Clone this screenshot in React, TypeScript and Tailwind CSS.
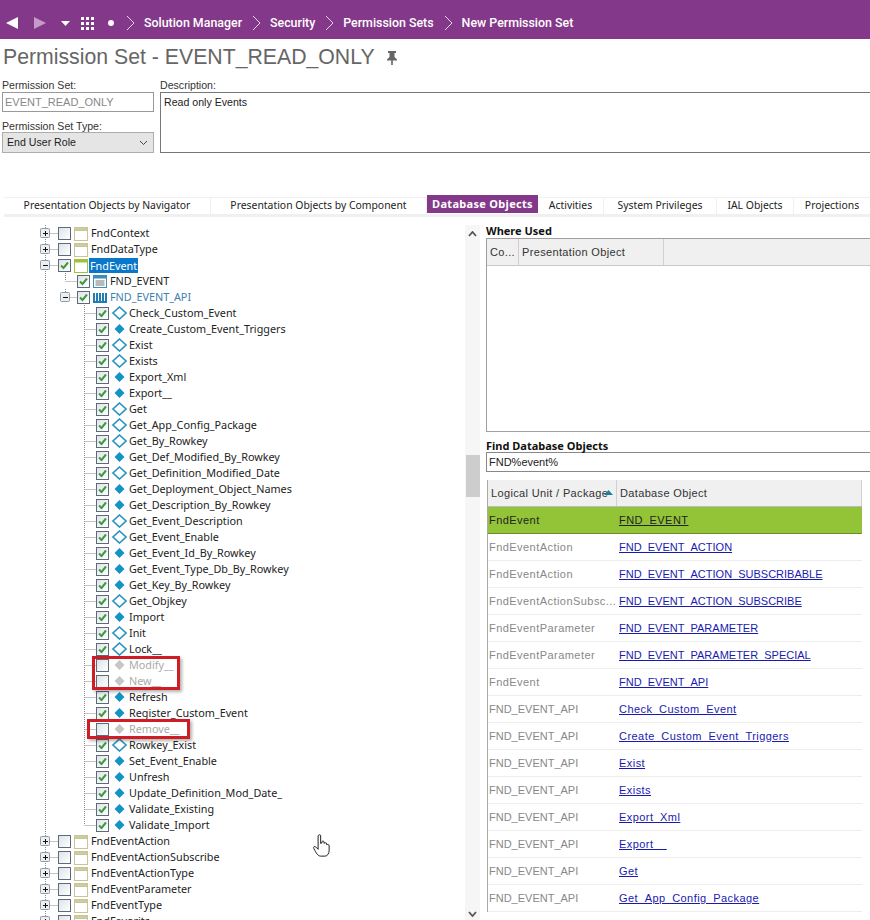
import React from "react";

const tree = "font-['Noto_Sans',sans-serif]";
const arial = "font-['Liberation_Sans',sans-serif]";

function Guides({ level, kind, last }: { level: number; kind?: "plus" | "minus"; last?: boolean }) {
  const w = level === 0 ? 58 : level === 1 ? 77 : 96;
  const expX = level === 0 ? 45 : 65;
  const dots = { stroke: "#8a8a8a", strokeDasharray: "1 1", fill: "none" } as const;
  return (
    <svg width={w} height={16} className="shrink-0">
      <line x1={45.5} y1={0} x2={45.5} y2={16} {...dots} />
      {level === 0 && <line x1={45.5} y1={8.5} x2={58} y2={8.5} {...dots} />}
      {level === 1 && (
        <>
          <line x1={65.5} y1={0} x2={65.5} y2={8} {...dots} />
          <line x1={65.5} y1={8.5} x2={77} y2={8.5} {...dots} />
        </>
      )}
      {level === 2 && (
        <>
          <line x1={84.5} y1={0} x2={84.5} y2={last ? 8 : 16} {...dots} />
          <line x1={84.5} y1={8.5} x2={96} y2={8.5} {...dots} />
        </>
      )}
      {kind && (
        <g>
          <rect x={expX - 4.5} y={3.5} width={9} height={9} rx={1} fill="#eceff2" stroke="#8f9aa5" />
          <line x1={expX - 2} y1={8.5} x2={expX + 3} y2={8.5} stroke="#111" />
          {kind === "plus" && <line x1={expX + 0.5} y1={6} x2={expX + 0.5} y2={11} stroke="#111" />}
        </g>
      )}
    </svg>
  );
}

function Check({ on }: { on: boolean }) {
  return (
    <span className="shrink-0 w-[13px] h-[13px] border border-[#5b6b78] bg-gradient-to-br from-[#dfe3e8] to-white flex items-center justify-center">
      {on && (
        <svg width="11" height="11" viewBox="0 0 11 11">
          <path d="M2 5.5 L4.5 8 L9 2.5" fill="none" stroke="#3f9a3f" strokeWidth="2" />
        </svg>
      )}
    </span>
  );
}

function Folder() {
  return (
    <svg width="14" height="15" viewBox="0 0 14 15" className="ml-[3px] mr-[3px] mt-[2px] shrink-0">
      <rect x="0.5" y="0.5" width="13" height="13" fill="#fff" stroke="#c9c59a" />
      <rect x="0.5" y="0.5" width="13" height="3" fill="#cfcba0" stroke="#c9c59a" />
    </svg>
  );
}

function GreenFolder() {
  return (
    <svg width="14" height="15" viewBox="0 0 14 15" className="ml-[3px] mt-[2px] shrink-0">
      <rect x="0.5" y="0.5" width="13" height="13" fill="#fff" stroke="#9fc13c" />
      <rect x="0.5" y="0.5" width="13" height="3" fill="#9fc13c" />
    </svg>
  );
}

function Diamond({ kind }: { kind: "open" | "solid" | "grey" }) {
  return (
    <svg width="15" height="14" viewBox="0 0 15 14" className="ml-[3px] mr-[2px] shrink-0">
      {kind === "open" ? (
        <path d="M7.5 1 L14 7 L7.5 13 L1 7 Z" fill="#fff" stroke="#2f95c0" strokeWidth="1.7" />
      ) : (
        <path d="M7.5 2 L12.5 7 L7.5 12 L2.5 7 Z" fill={kind === "solid" ? "#1493c7" : "#c6c6c6"} />
      )}
    </svg>
  );
}

function L0({ name, open }: { name: string; open?: boolean }) {
  return (
    <div className={`flex h-4 items-center text-[10.8px] ${tree} text-[#222]`}>
      <Guides level={0} kind={open ? "minus" : "plus"} />
      <Check on={!!open} />
      {open ? (
        <>
          <GreenFolder />
          <span className="ml-[1px] px-[1px] h-[15px] leading-[15px] bg-[#0a78c8] text-white">{name}</span>
        </>
      ) : (
        <>
          <Folder />
          <span>{name}</span>
        </>
      )}
    </div>
  );
}

const methods: [string, "open" | "solid" | "grey"][] = [
  ["Check_Custom_Event", "open"],
  ["Create_Custom_Event_Triggers", "solid"],
  ["Exist", "open"],
  ["Exists", "open"],
  ["Export_Xml", "solid"],
  ["Export__", "solid"],
  ["Get", "open"],
  ["Get_App_Config_Package", "open"],
  ["Get_By_Rowkey", "open"],
  ["Get_Def_Modified_By_Rowkey", "solid"],
  ["Get_Definition_Modified_Date", "open"],
  ["Get_Deployment_Object_Names", "solid"],
  ["Get_Description_By_Rowkey", "solid"],
  ["Get_Event_Description", "open"],
  ["Get_Event_Enable", "open"],
  ["Get_Event_Id_By_Rowkey", "solid"],
  ["Get_Event_Type_Db_By_Rowkey", "solid"],
  ["Get_Key_By_Rowkey", "solid"],
  ["Get_Objkey", "open"],
  ["Import", "solid"],
  ["Init", "open"],
  ["Lock__", "open"],
  ["Modify__", "grey"],
  ["New__", "grey"],
  ["Refresh", "solid"],
  ["Register_Custom_Event", "solid"],
  ["Remove__", "grey"],
  ["Rowkey_Exist", "open"],
  ["Set_Event_Enable", "solid"],
  ["Unfresh", "solid"],
  ["Update_Definition_Mod_Date_", "solid"],
  ["Validate_Existing", "solid"],
  ["Validate_Import", "solid"],
];

const results: [string, string][] = [
  ["FndEventAction", "FND_EVENT_ACTION"],
  ["FndEventAction", "FND_EVENT_ACTION_SUBSCRIBABLE"],
  ["FndEventActionSubsc...", "FND_EVENT_ACTION_SUBSCRIBE"],
  ["FndEventParameter", "FND_EVENT_PARAMETER"],
  ["FndEventParameter", "FND_EVENT_PARAMETER_SPECIAL"],
  ["FndEvent", "FND_EVENT_API"],
  ["FND_EVENT_API", "Check_Custom_Event"],
  ["FND_EVENT_API", "Create_Custom_Event_Triggers"],
  ["FND_EVENT_API", "Exist"],
  ["FND_EVENT_API", "Exists"],
  ["FND_EVENT_API", "Export_Xml"],
  ["FND_EVENT_API", "Export__"],
  ["FND_EVENT_API", "Get"],
  ["FND_EVENT_API", "Get_App_Config_Package"],
];

const tabs: [string, string][] = [
  ["Presentation Objects by Navigator", "w-[207px]"],
  ["Presentation Objects by Component", "w-[216px]"],
];
const tabs2: [string, string][] = [
  ["Activities", "w-[66px]"],
  ["System Privileges", "w-[113px]"],
  ["IAL Objects", "w-[77px]"],
  ["Projections", "w-[77px]"],
];

const track = (s: string) => (s === s.toUpperCase() ? "" : "tracking-[0.45px]");

function Crumb({ children, first }: { children: React.ReactNode; first?: boolean }) {
  return (
    <span className={`flex items-center gap-[9px] ${first ? "ml-[12px]" : "ml-[10px]"}`}>
      <svg width="9" height="16" viewBox="0 0 9 16" className="shrink-0">
        <path d="M1 1 L8 8 L1 15" fill="none" stroke="#e4d2e6" strokeWidth="1" />
      </svg>
      <span>{children}</span>
    </span>
  );
}

export default function App() {
  return (
    <div className={`w-[870px] h-[920px] overflow-hidden bg-white ${arial} flex flex-col`}>
      <header className="h-[39px] shrink-0 bg-[#843889] pt-[7px] flex items-center text-white font-['Roboto',sans-serif] font-medium text-[12.4px]">
        <svg width="14" height="14" viewBox="0 0 14 14" className="ml-[5px]"><path d="M13 1 V13 L1 7 Z" fill="#fff" /></svg>
        <svg width="14" height="14" viewBox="0 0 14 14" className="ml-[14px]"><path d="M1 1 V13 L13 7 Z" fill="#c59bca" /></svg>
        <svg width="9" height="5" viewBox="0 0 9 5" className="ml-[14px]"><path d="M0 0 H9 L4.5 5 Z" fill="#fff" /></svg>
        <svg width="15" height="15" viewBox="0 0 15 15" className="ml-[10px]" fill="#fff">
          {[1, 6, 11].map((y) => [1, 6, 11].map((x) => <rect key={`${x}-${y}`} x={x} y={y} width="3" height="3" />))}
        </svg>
        <span className="ml-[13px] w-[6px] h-[6px] rounded-full bg-white" />
        <Crumb first>Solution Manager</Crumb>
        <Crumb>Security</Crumb>
        <Crumb>Permission Sets</Crumb>
        <Crumb>New Permission Set</Crumb>
      </header>

      <div className="h-[36px] shrink-0 flex items-center pl-[3px] pt-[1px] text-[21.25px] text-[#666]">
        <span>Permission Set - EVENT_READ_ONLY</span>
        <svg width="12" height="14" viewBox="0 0 12 14" className="ml-[11px]" fill="#666">
          <path d="M2 0 H10 V2 H8.5 V6 L11 8.5 V9.5 H6.8 V14 H5.2 V9.5 H1 V8.5 L3.5 6 V2 H2 Z" />
        </svg>
      </div>

      <div className="flex h-[122px] shrink-0 text-[10.6px] text-[#333]">
        <div className="w-[160px] pl-[2px] shrink-0 flex flex-col pt-[4px]">
          <span className="h-[13px] leading-[13px]">Permission Set:</span>
          <div className="w-[152px] h-[20px] border border-[#999] text-[#888] text-[11px] pl-[2px] leading-[18px]">EVENT_READ_ONLY</div>
          <span className="mt-[8px] h-[13px] leading-[13px]">Permission Set Type:</span>
          <div className="-mt-[1px] w-[152px] h-[21px] border border-[#adadad] bg-[#e5e5e5] pl-[4px] flex items-center justify-between pr-[5px] text-[#222]">
            End User Role
            <svg width="9" height="6" viewBox="0 0 9 6"><path d="M1 1 L4.5 4.5 L8 1" fill="none" stroke="#444" /></svg>
          </div>
        </div>
        <div className="flex-1 flex flex-col pt-[4px]">
          <span className="h-[13px] leading-[13px]">Description:</span>
          <div className="h-[61px] w-[720px] border border-[#777] pl-[3px] text-[#222] leading-[18px]">Read only Events</div>
        </div>
      </div>

      <nav className={`h-[20px] shrink-0 ml-[4px] flex items-stretch text-[10.4px] ${tree} text-[#222] border-b-[3px] border-[#f0f0f0]`}>
        {tabs.map(([t, w]) => (
          <span key={t} className={`${w} h-[17px] flex items-center justify-center whitespace-nowrap border-r border-t border-[#f0f0f0] shrink-0`}>{t}</span>
        ))}
        <span className="w-[111px] -mt-[2px] h-[18px] bg-[#843889] text-white font-bold text-[11px] tracking-[0.3px] flex items-center justify-center whitespace-nowrap shrink-0">Database Objects</span>
        {tabs2.map(([t, w]) => (
          <span key={t} className={`${w} h-[17px] flex items-center justify-center whitespace-nowrap border-r border-t border-[#f0f0f0] shrink-0`}>{t}</span>
        ))}
      </nav>

      <div className="flex-1 flex min-h-0">
        <div className="w-[465px] shrink-0 overflow-hidden pt-[8px]">
          <L0 name="FndContext" />
          <L0 name="FndDataType" />
          <L0 name="FndEvent" open />
          <div className={`flex h-4 items-center text-[10.8px] ${tree} text-[#222]`}>
            <Guides level={1} />
            <Check on />
            <svg width="14" height="14" viewBox="0 0 14 14" className="ml-[3px] mr-[3px] shrink-0">
              <rect x="0.5" y="1.5" width="13" height="12" fill="#fff" stroke="#3a8fb7" />
              <rect x="0.5" y="1.5" width="13" height="3" fill="#3a8fb7" />
              <rect x="2.5" y="6" width="9" height="6" fill="#b9b9b9" />
            </svg>
            <span>FND_EVENT</span>
          </div>
          <div className={`flex h-4 items-center text-[10.8px] ${tree} text-[#3d7fb0]`}>
            <Guides level={1} kind="minus" />
            <Check on />
            <svg width="14" height="14" viewBox="0 0 14 14" className="ml-[3px] mr-[3px] shrink-0" fill="#1f7fb5">
              <rect x="0" y="3" width="2" height="8" />
              <rect x="3" y="3" width="2" height="8" />
              <rect x="6" y="3" width="2" height="8" />
              <rect x="9" y="3" width="2" height="8" />
              <rect x="12" y="3" width="2" height="8" />
              <rect x="0" y="11" width="14" height="2" />
            </svg>
            <span>FND_EVENT_API</span>
          </div>
          {methods.map(([m, k], i) => {
            const grey = k === "grey";
            const box =
              m === "Remove__"
                ? "relative after:absolute after:z-10 after:content-[''] after:left-[-9px] after:top-[-4px] after:w-[103px] after:h-[20px] after:border-[3px] after:border-[#d01c24] after:shadow-[2px_2px_3px_rgba(0,0,0,0.3)]"
                : m === "Modify__"
                  ? "relative after:absolute after:z-10 after:content-[''] after:left-[-4px] after:top-[-3px] after:w-[88px] after:h-[34px] after:border-[3px] after:border-[#d01c24] after:shadow-[2px_2px_3px_rgba(0,0,0,0.3)]"
                  : "";
            return (
              <div key={m} className={`flex h-4 items-center text-[10.8px] ${tree} ${grey ? "text-[#aaa]" : "text-[#222]"}`}>
                <Guides level={2} last={i === methods.length - 1} />
                <span className={box}>
                  <Check on={!grey} />
                </span>
                <Diamond kind={k} />
                <span>{m}</span>
              </div>
            );
          })}
          {["FndEventAction", "FndEventActionSubscribe", "FndEventActionType", "FndEventParameter", "FndEventType", "FndFavorits"].map((n) => (
            <L0 key={n} name={n} />
          ))}
        </div>

        <div className="w-[15px] mt-[8px] shrink-0 flex flex-col items-center pt-[6px] bg-[#f6f6f6]">
          <svg width="9" height="6" viewBox="0 0 9 6"><path d="M1 5 L4.5 1 L8 5" fill="none" stroke="#555" strokeWidth="1.8" /></svg>
          <div className="mt-[218px] w-[14px] h-[42px] bg-[#cdcdcd]" />
          <div className="flex-1" />
          <svg width="9" height="6" viewBox="0 0 9 6" className="mb-[3px]"><path d="M1 1 L4.5 5 L8 1" fill="none" stroke="#555" strokeWidth="1.8" /></svg>
        </div>

        <div className="flex-1 min-w-0 ml-[6px] text-[11px]">
          <div className={`h-[14px] mt-[7px] font-bold text-[#111] leading-[14px] ${tree}`}>Where Used</div>
          <div className="h-[194px] w-[400px] border border-[#a0a0a0]">
            <div className="h-[27px] bg-[#f0f0f0] border-b border-[#c8c8c8] flex text-[#333] tracking-[0.35px]">
              <span className="w-[32px] pl-[3px] flex items-center border-r border-[#d0d0d0]">Co...</span>
              <span className="w-[145px] pl-[3px] flex items-center border-r border-[#d0d0d0]">Presentation Object</span>
            </div>
          </div>
          <div className={`h-[13px] mt-[7px] font-bold text-[#111] leading-[13px] ${tree}`}>Find Database Objects</div>
          <div className="h-[20px] w-[400px] border border-[#888] pl-[2px] leading-[18px] text-[#222]">FND%event%</div>
          <div className="mt-[8px] ml-[1px] w-[375px] border-l border-[#aaa]">
            <div className="flex h-[27px] bg-[#f0f0f0] text-[#333] border-b border-[#bbb] tracking-[0.35px]">
              <span className="w-[129px] pl-[3px] flex items-center border-r border-[#d0d0d0] whitespace-nowrap relative">
                Logical Unit / Package
                <svg width="9" height="5" viewBox="0 0 9 5" className="absolute right-[3px] top-[10px]"><path d="M0 5 L4.5 0 L9 5 Z" fill="#1d7f9a" /></svg>
              </span>
              <span className="flex-1 pl-[3px] flex items-center border-r border-[#d0d0d0]">Database Object</span>
            </div>
            <div className="flex h-[27px] items-center bg-[#93c437] border-b border-[#6d8f2a] text-[#222]">
              <span className="w-[130px] pl-[1px] tracking-[0.45px]">FndEvent</span>
              <span className="underline pl-[1px] tracking-[0.45px]">FND_EVENT</span>
            </div>
            {results.map(([a, b], i) => (
              <div key={i} className="flex h-[27px] items-center border-b border-[#eeeeee]">
                <span className={`w-[130px] pl-[1px] text-[#888] whitespace-nowrap ${track(a)}`}>{a}</span>
                <span className={`underline pl-[1px] text-[#1a1ab0] ${track(b)}`}>{b}</span>
              </div>
            ))}
          </div>
        </div>
      </div>

      <svg width="17" height="23" viewBox="2 0 20 27" className="fixed left-[313px] top-[834px]">
        <path d="M8 2 C9 0.5 11 0.5 11 2 V11 L12.5 10.5 V9 C13 8 15 8 15 9.5 V11 C16 10 18 10 18 11.5 V12.5 C19 12 21 12 21 14 V19 C21 23 19 26 16 26 H11 C8 26 6 23 3 17 C2 15 4 14 5 15 L8 18 Z" fill="#fff" stroke="#111" strokeWidth="1.1" />
      </svg>
    </div>
  );
}
